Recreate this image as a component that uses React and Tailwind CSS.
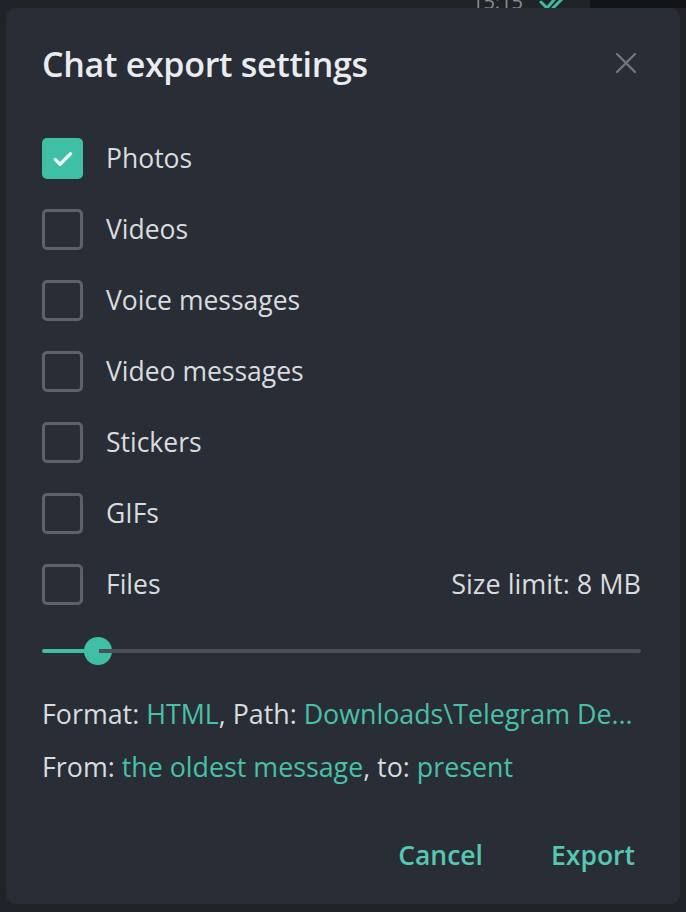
import React, { useState } from "react"

const font = { fontFamily: '"Open Sans", "Noto Sans", sans-serif' }

const items = [
  "Photos",
  "Videos",
  "Voice messages",
  "Video messages",
  "Stickers",
  "GIFs",
  "Files",
]

function Checkbox({ checked }) {
  if (checked) {
    return (
      <span className="flex h-[41px] w-[41px] shrink-0 items-center justify-center rounded-[5px] bg-[#40bfa7]">
        <svg width="28" height="28" viewBox="0 0 24 24" fill="none">
          <path
            d="M5.5 12.5l4 4L18.5 7.5"
            stroke="#eef8f6"
            strokeWidth="2.8"
            strokeLinecap="round"
            strokeLinejoin="round"
          />
        </svg>
      </span>
    )
  }
  return (
    <span className="h-[41px] w-[41px] shrink-0 rounded-[5px] border-[3px] border-[#5d6168]" />
  )
}

export default function App() {
  const [checked, setChecked] = useState({ Photos: true })

  return (
    <div
      className="relative h-[912px] w-[686px] overflow-hidden bg-[#202328] px-[6px] pt-[8px]"
      style={font}
    >
      {/* bits of the chat behind the dialog */}
      <div className="absolute left-[472px] top-[-13px] flex items-center gap-4 text-[20px] text-[#8a8f96]">
        <span>15:15</span>
        <svg width="34" height="20" viewBox="0 0 34 20" fill="none">
          <path d="M2 10l6 6L20 2" stroke="#3fb99f" strokeWidth="3" strokeLinecap="round" />
          <path d="M14 16L28 2" stroke="#3fb99f" strokeWidth="3" strokeLinecap="round" />
        </svg>
      </div>
      <div className="absolute right-0 top-0 h-[8px] w-[96px] bg-[#131417]" />

      <div className="relative flex h-[896px] w-[674px] flex-col rounded-[10px] bg-[#292d35] pl-[36px] pr-[39px]">
        <div className="flex h-[130px] items-start justify-between pt-[34px]">
          <h1 className="text-[34px] font-semibold leading-[44px] tracking-[-0.3px] text-[#e9ebee]">
            Chat export settings
          </h1>
          <svg className="mr-[4px] mt-[10px]" width="22" height="22" viewBox="0 0 22 22" fill="none">
            <path d="M2 2l18 18M20 2L2 20" stroke="#72767c" strokeWidth="2.4" strokeLinecap="round" />
          </svg>
        </div>

        <div className="flex flex-col gap-[30px]">
          {items.map(name => (
            <div
              key={name}
              className="flex h-[41px] cursor-pointer items-center"
              onClick={() => setChecked(c => ({ ...c, [name]: !c[name] }))}
            >
              <Checkbox checked={!!checked[name]} />
              <span className="ml-[23px] text-[26.5px] text-[#d9dcdf]">{name}</span>
              {name === "Files" && (
                <span className="ml-auto text-[27px] text-[#d9dcdf]">Size limit: 8 MB</span>
              )}
            </div>
          ))}
        </div>

        <div className="mt-[31px] flex h-[30px] items-center">
          <div className="h-[4px] w-[55px] rounded-l-full bg-[#40bfa7]" />
          <div className="-ml-[13px] h-[28px] w-[28px] shrink-0 rounded-full bg-[#40bfa7]" />
          <div className="-ml-[13px] h-[4px] flex-1 rounded-r-full bg-[#4b4f56]" />
        </div>

        <div className="mt-[32px] flex flex-col gap-[21px] text-[26.8px] leading-[32px] text-[#d9dcdf]">
          <p className="whitespace-nowrap">
            Format: <span className="text-[#49c0aa]">HTML</span>, Path:{" "}
            <span className="text-[#49c0aa]">Downloads\Telegram De...</span>
          </p>
          <p>
            From: <span className="text-[#49c0aa]">the oldest message</span>, to:{" "}
            <span className="text-[#49c0aa]">present</span>
          </p>
        </div>

        <div className="mt-[53px] flex justify-end gap-[68px] pr-[6px] text-[26.5px] font-semibold text-[#56c7b2]">
          <button>Cancel</button>
          <button>Export</button>
        </div>
      </div>
    </div>
  )
}
